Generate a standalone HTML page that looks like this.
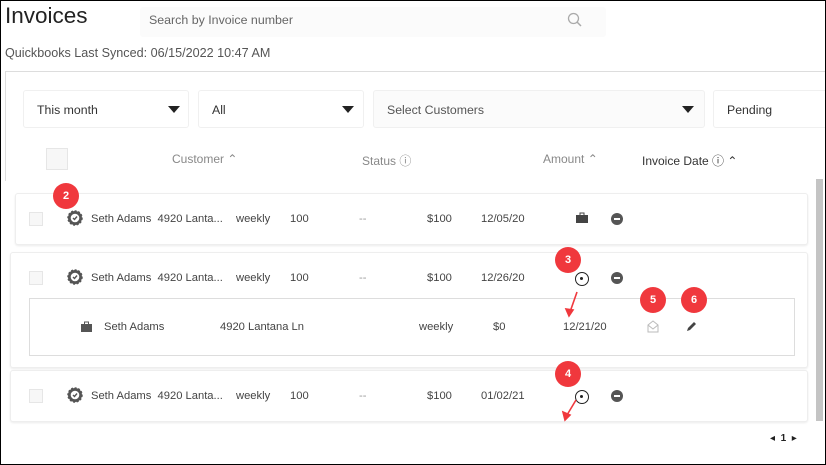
<html><head><style>
*{margin:0;padding:0;box-sizing:border-box}
body{width:826px;height:465px;position:relative;overflow:hidden;background:#fff;font-family:"Liberation Sans",sans-serif;color:#333}
.a{position:absolute;white-space:nowrap}
.box{position:absolute;background:#fff;border:1px solid #eee;border-radius:3px;box-shadow:0 1px 2px rgba(0,0,0,.08)}
.t{font-size:11.2px;color:#444}
.h{font-size:12px;color:#888}
.dd{position:absolute;font-size:12.3px;color:#333;padding:0 0 0 13px;line-height:38px;background:#fff;border:1px solid #f0f0f0;border-radius:3px;height:38px}
.tri{position:absolute;top:15px;width:0;height:0;border-left:6px solid transparent;border-right:6px solid transparent;border-top:7px solid #222}
.cb{position:absolute;width:14px;height:14px;border:1px solid #e6e6e6;background:#f7f7f7}
.badge{position:absolute;width:26px;height:26px;border-radius:50%;background:#f0383d;color:#fff;font-size:11px;font-weight:bold;text-align:center;line-height:26px}
.minus{position:absolute;width:12px;height:12px;border-radius:50%;background:#555}
.minus:after{content:"";position:absolute;left:3px;top:5px;width:6px;height:2px;background:#fff}
.ring{position:absolute;width:14px;height:14px;border-radius:50%;border:1.5px solid #222}
.ring:after{content:"";position:absolute;left:4px;top:4px;width:3px;height:3px;border-radius:50%;background:#222}
</style></head><body>
<div class="a" style="left:0;top:0;width:826px;height:465px;border:1px solid #000;z-index:9;pointer-events:none"></div>
<div class="a" style="left:5px;top:3px;font-size:22.5px;color:#222">Invoices</div>
<div class="a" style="left:140px;top:7px;width:466px;height:30px;background:#fbfbfb;border-radius:3px"></div>
<div class="a" style="left:149px;top:13px;font-size:12.4px;color:#666">Search by Invoice number</div>
<svg class="a" style="left:567px;top:12px" width="16" height="16"><circle cx="6.5" cy="6.5" r="5" fill="none" stroke="#aaa" stroke-width="1.3"/><line x1="10" y1="10" x2="14" y2="14" stroke="#aaa" stroke-width="1.5"/></svg>
<div class="a" style="left:5px;top:46px;font-size:12.6px;color:#555">Quickbooks Last Synced: 06/15/2022 10:47 AM</div>
<div class="a" style="left:5px;top:71px;width:830px;height:110px;border-top:1px solid #ddd;border-left:1px solid #ddd"></div>
<div class="dd" style="left:23px;top:90px;width:166px">This month<div class="tri" style="left:144px"></div></div>
<div class="dd" style="left:198px;top:90px;width:166px">All<div class="tri" style="left:143px"></div></div>
<div class="dd" style="left:373px;top:90px;width:332px;background:#fbfbfb;color:#555">Select Customers<div class="tri" style="left:308px"></div></div>
<div class="dd" style="left:713px;top:90px;width:120px">Pending</div>
<div class="cb" style="left:46px;top:148px;width:22px;height:22px"></div>
<div class="a h" style="left:172px;top:152px">Customer ⌃</div>
<div class="a h" style="left:362px;top:152px">Status ⓘ</div>
<div class="a h" style="left:543px;top:152px">Amount ⌃</div>
<div class="a" style="left:642px;top:152px;font-size:12px;color:#333">Invoice Date ⓘ ⌃</div>
<div class="a" style="left:816px;top:179px;width:7px;height:242px;background:#c4c4c4"></div>

<div class="box" style="left:15px;top:193px;width:793px;height:52px"></div>
<div class="box" style="left:10px;top:252px;width:798px;height:116px"></div>
<div class="box" style="left:10px;top:370px;width:798px;height:52px"></div>
<div class="a" style="left:29px;top:298px;width:766px;height:58px;border:1px solid #ddd;background:#fff"></div>

<div class="cb" style="left:29px;top:212px"></div>
<div class="cb" style="left:29px;top:271px"></div>
<div class="cb" style="left:29px;top:389px"></div>
<svg class="a" style="left:67px;top:210px" width="16" height="16"><circle cx="8" cy="8" r="7" fill="#555" stroke="#555" stroke-width="1.5" stroke-dasharray="2 1.6"/><circle cx="8" cy="8" r="4.3" fill="#fff"/><path d="M6 8l1.5 1.5 2.5-3" stroke="#555" stroke-width="1.4" fill="none"/></svg>
<svg class="a" style="left:67px;top:269px" width="16" height="16"><circle cx="8" cy="8" r="7" fill="#555" stroke="#555" stroke-width="1.5" stroke-dasharray="2 1.6"/><circle cx="8" cy="8" r="4.3" fill="#fff"/><path d="M6 8l1.5 1.5 2.5-3" stroke="#555" stroke-width="1.4" fill="none"/></svg>
<svg class="a" style="left:67px;top:387px" width="16" height="16"><circle cx="8" cy="8" r="7" fill="#555" stroke="#555" stroke-width="1.5" stroke-dasharray="2 1.6"/><circle cx="8" cy="8" r="4.3" fill="#fff"/><path d="M6 8l1.5 1.5 2.5-3" stroke="#555" stroke-width="1.4" fill="none"/></svg>

<div class="a t" style="left:91px;top:213px">Seth Adams&nbsp;&nbsp;4920 Lanta...</div>
<div class="a t" style="left:236px;top:213px">weekly</div><div class="a t" style="left:290px;top:213px">100</div>
<div class="a t" style="left:359px;top:213px;color:#999">--</div><div class="a t" style="left:427px;top:213px">$100</div><div class="a t" style="left:481px;top:213px">12/05/20</div>
<svg class="a" style="left:576px;top:212px" width="12" height="12"><rect x="0" y="3" width="12" height="8" fill="#444"/><rect x="4" y="1" width="4" height="2.5" fill="none" stroke="#444"/></svg>
<div class="minus" style="left:611px;top:213px"></div>

<div class="a t" style="left:91px;top:272px">Seth Adams&nbsp;&nbsp;4920 Lanta...</div>
<div class="a t" style="left:236px;top:272px">weekly</div><div class="a t" style="left:290px;top:272px">100</div>
<div class="a t" style="left:359px;top:272px;color:#999">--</div><div class="a t" style="left:427px;top:272px">$100</div><div class="a t" style="left:481px;top:272px">12/26/20</div>
<div class="ring" style="left:575px;top:272px"></div><div class="minus" style="left:611px;top:272px"></div>

<svg class="a" style="left:81px;top:321px" width="12" height="12"><rect x="0" y="3" width="11" height="8" fill="#555"/><rect x="3.5" y="1" width="4" height="2.5" fill="none" stroke="#555"/></svg>
<div class="a t" style="left:104px;top:321px">Seth Adams</div>
<div class="a t" style="left:220px;top:321px">4920 Lantana Ln</div>
<div class="a t" style="left:419px;top:321px">weekly</div><div class="a t" style="left:493px;top:321px">$0</div><div class="a t" style="left:563px;top:321px">12/21/20</div>
<svg class="a" style="left:647px;top:320px" width="12" height="13"><path d="M1 5l5-4 5 4v7H1z M1 5l5 4 5-4" fill="none" stroke="#bbb"/></svg>
<svg class="a" style="left:685px;top:320px" width="13" height="13"><path d="M2 11l1-3 6-6 2 2-6 6z" fill="#444"/></svg>

<div class="a t" style="left:91px;top:390px">Seth Adams&nbsp;&nbsp;4920 Lanta...</div>
<div class="a t" style="left:236px;top:390px">weekly</div><div class="a t" style="left:290px;top:390px">100</div>
<div class="a t" style="left:359px;top:390px;color:#999">--</div><div class="a t" style="left:427px;top:390px">$100</div><div class="a t" style="left:481px;top:390px">01/02/21</div>
<div class="ring" style="left:575px;top:390px"></div><div class="minus" style="left:611px;top:390px"></div>

<div class="badge" style="left:53px;top:183px">2</div>
<div class="badge" style="left:555px;top:247px">3</div>
<div class="badge" style="left:555px;top:361px">4</div>
<div class="badge" style="left:640px;top:287px">5</div>
<div class="badge" style="left:681px;top:287px">6</div>
<svg class="a" style="left:0;top:0" width="826" height="465"><g stroke="#f0383d" stroke-width="1.6" fill="#f0383d"><line x1="577" y1="292" x2="570" y2="312"/><path d="M566 309l3 7 4-6z"/><line x1="576" y1="400" x2="567" y2="415"/><path d="M563 412l2 8 5-5z"/></g></svg>
<div class="a" style="left:770px;top:433px;font-size:10px;color:#222">◂&nbsp;&nbsp;<b>1</b>&nbsp;&nbsp;▸</div>
</body></html>
